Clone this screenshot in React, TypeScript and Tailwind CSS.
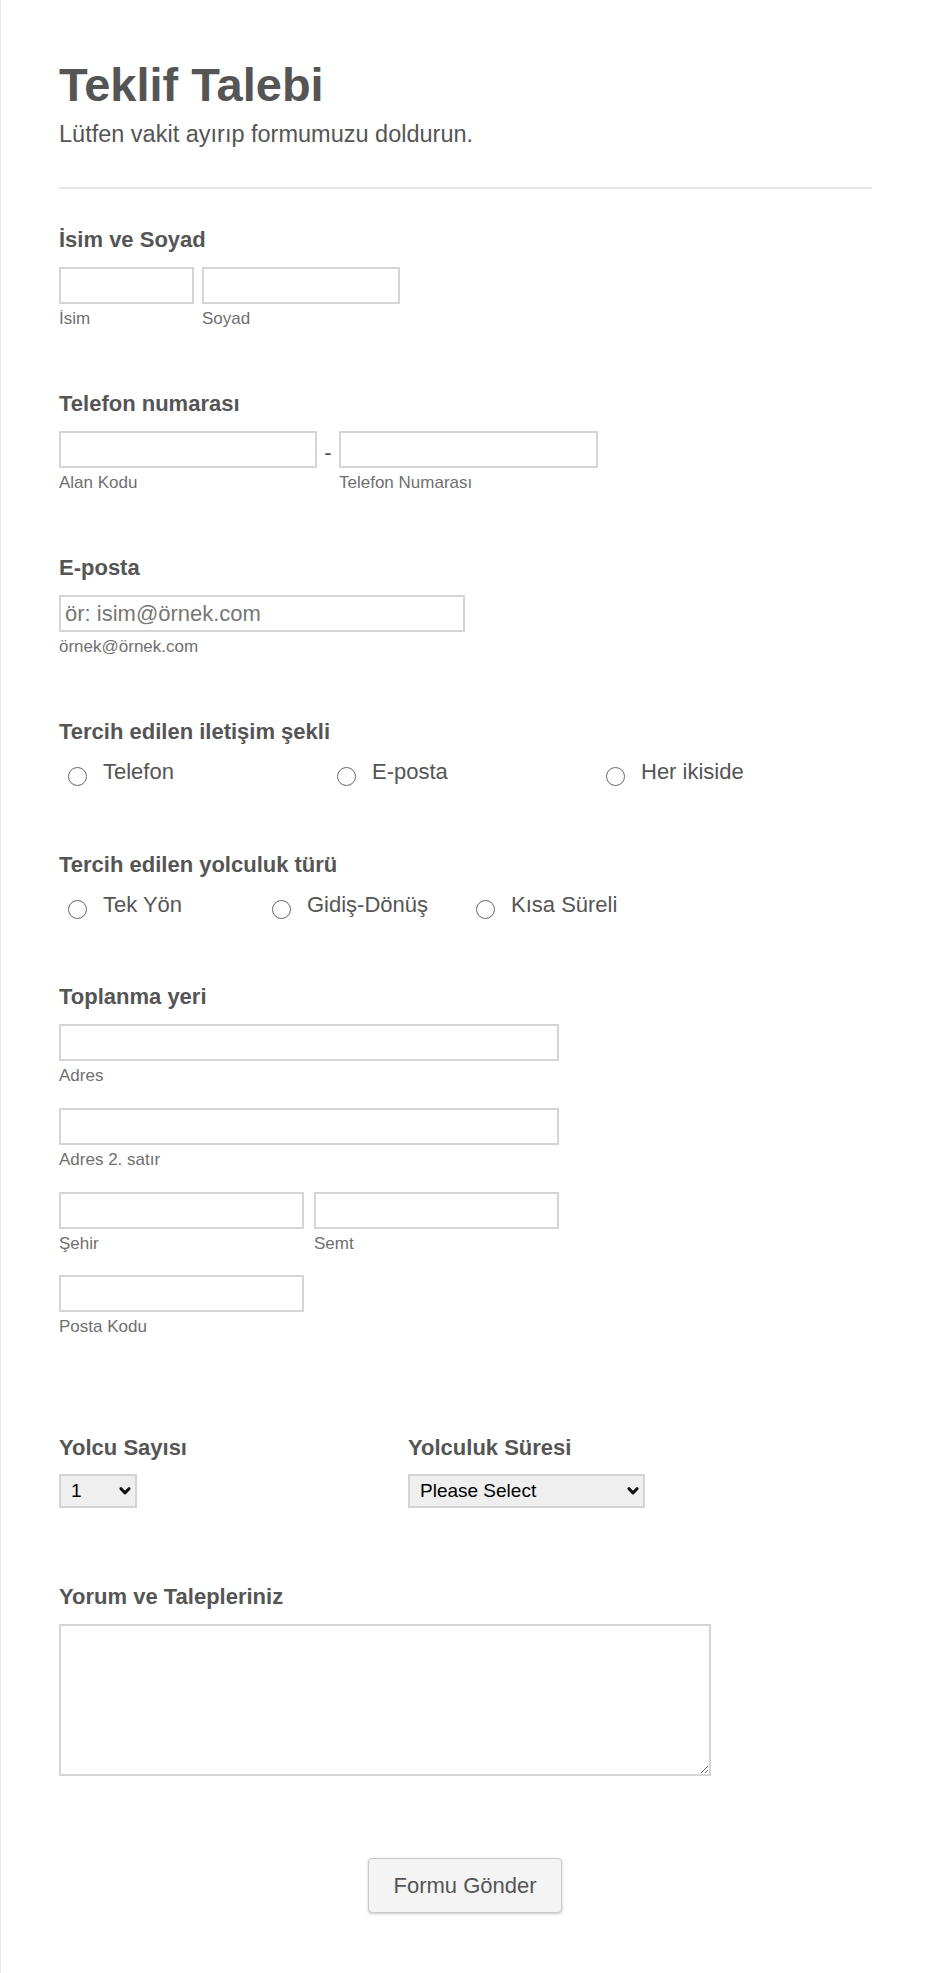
import React from 'react';

const labelCls = 'text-[22px] leading-[28px] font-bold text-[#555]';
const subCls = 'mt-[5px] text-[17px] leading-[20px] text-[#6f6f6f]';
const inputCls =
  'block h-[37px] border-2 border-[#d5d5d5] bg-white px-1 text-[22px] text-[#555] outline-none placeholder:text-[#777]';

function Radio({ label, width }: { label: string; width: string }) {
  return (
    <label className={`flex items-start ${width}`}>
      <span className="ml-[9px] mt-[9px] size-[19px] shrink-0 rounded-full border-[1.5px] border-[#666] bg-white" />
      <span className="ml-[16px] text-[22px] leading-[28px] text-[#555]">{label}</span>
    </label>
  );
}

function Chevron() {
  return (
    <svg
      className="pointer-events-none absolute right-[6px] top-1/2 -translate-y-1/2"
      width="12"
      height="9"
      viewBox="0 0 12 9"
      fill="none"
    >
      <path d="M2 2.2 L6 6.4 L10 2.2" stroke="#111" strokeWidth="3" strokeLinecap="round" strokeLinejoin="round" />
    </svg>
  );
}

export default function App() {
  return (
    <div className="min-h-[1973px] border-l border-[#ececec] bg-white pl-[58px] pt-[58px] pb-[60px] font-['Liberation_Sans',Arial,sans-serif]">
      <div className="w-[813px]">
        {/* Header */}
        <h1 className="text-[47px] leading-[54px] font-bold text-[#555]">Teklif Talebi</h1>
        <p className="mt-[7px] text-[23.5px] leading-[30px] text-[#555]">Lütfen vakit ayırıp formumuzu doldurun.</p>
        <div className="mt-[38px] h-[2px] bg-[#e8e8e8]" />

        {/* Name */}
        <div className={`mt-[37px] ${labelCls}`}>İsim ve Soyad</div>
        <div className="mt-[13px] flex gap-[8px]">
          <div className="flex flex-col">
            <input className={`${inputCls} w-[135px]`} />
            <span className={subCls}>İsim</span>
          </div>
          <div className="flex flex-col">
            <input className={`${inputCls} w-[198px]`} />
            <span className={subCls}>Soyad</span>
          </div>
        </div>

        {/* Phone */}
        <div className={`mt-[61px] ${labelCls}`}>Telefon numarası</div>
        <div className="mt-[13px] flex items-start">
          <div className="flex flex-col">
            <input className={`${inputCls} w-[258px]`} />
            <span className={subCls}>Alan Kodu</span>
          </div>
          <span className="w-[22px] pt-[8px] text-center text-[22px] leading-[28px] text-[#555]">-</span>
          <div className="flex flex-col">
            <input className={`${inputCls} w-[259px]`} />
            <span className={subCls}>Telefon Numarası</span>
          </div>
        </div>

        {/* Email */}
        <div className={`mt-[61px] ${labelCls}`}>E-posta</div>
        <input className={`mt-[13px] ${inputCls} w-[406px]`} placeholder="ör: isim@örnek.com" />
        <div className={subCls}>örnek@örnek.com</div>

        {/* Contact method */}
        <div className={`mt-[61px] ${labelCls}`}>Tercih edilen iletişim şekli</div>
        <div className="mt-[12px] flex">
          <Radio label="Telefon" width="w-[269px]" />
          <Radio label="E-posta" width="w-[269px]" />
          <Radio label="Her ikiside" width="w-[269px]" />
        </div>

        {/* Trip type */}
        <div className={`mt-[65px] ${labelCls}`}>Tercih edilen yolculuk türü</div>
        <div className="mt-[12px] flex">
          <Radio label="Tek Yön" width="w-[204px]" />
          <Radio label="Gidiş-Dönüş" width="w-[204px]" />
          <Radio label="Kısa Süreli" width="w-[204px]" />
        </div>

        {/* Address */}
        <div className={`mt-[64px] ${labelCls}`}>Toplanma yeri</div>
        <input className={`mt-[13px] ${inputCls} w-[500px]`} />
        <div className={subCls}>Adres</div>
        <input className={`mt-[22px] ${inputCls} w-[500px]`} />
        <div className={subCls}>Adres 2. satır</div>
        <div className="mt-[22px] flex gap-[10px]">
          <div className="flex flex-col">
            <input className={`${inputCls} w-[245px]`} />
            <span className={subCls}>Şehir</span>
          </div>
          <div className="flex flex-col">
            <input className={`${inputCls} w-[245px]`} />
            <span className={subCls}>Semt</span>
          </div>
        </div>
        <input className={`mt-[21px] ${inputCls} w-[245px]`} />
        <div className={subCls}>Posta Kodu</div>

        {/* Selects */}
        <div className="mt-[97px] flex">
          <div className="w-[349px]">
            <div className={labelCls}>Yolcu Sayısı</div>
            <div className="relative mt-[12px] w-[78px]">
              <select className="block h-[34px] w-full appearance-none border-2 border-[#d3d3d3] bg-[#efefef] pl-[10px] text-[19px] text-black outline-none">
                <option>1</option>
                <option>2</option>
                <option>3</option>
                <option>4</option>
                <option>5</option>
              </select>
              <Chevron />
            </div>
          </div>
          <div>
            <div className={labelCls}>Yolculuk Süresi</div>
            <div className="relative mt-[12px] w-[237px]">
              <select className="block h-[34px] w-full appearance-none border-2 border-[#d3d3d3] bg-[#efefef] pl-[10px] text-[19px] text-black outline-none">
                <option>Please Select</option>
                <option>1 gün</option>
                <option>2-3 gün</option>
                <option>1 hafta</option>
              </select>
              <Chevron />
            </div>
          </div>
        </div>

        {/* Comments */}
        <div className={`mt-[75px] ${labelCls}`}>Yorum ve Talepleriniz</div>
        <textarea className="mt-[13px] block h-[152px] w-[652px] border-2 border-[#d5d5d5] bg-white p-1 text-[18px] text-[#555] outline-none" />

        {/* Submit */}
        <div className="mt-[82px] flex w-[812px] justify-center">
          <button className="h-[55px] w-[194px] rounded-[4px] border border-[#c9c9c9] bg-[#f4f4f4] text-[22px] text-[#555] shadow-[0_1px_3px_rgba(0,0,0,0.22)]">
            Formu Gönder
          </button>
        </div>
      </div>
    </div>
  );
}
